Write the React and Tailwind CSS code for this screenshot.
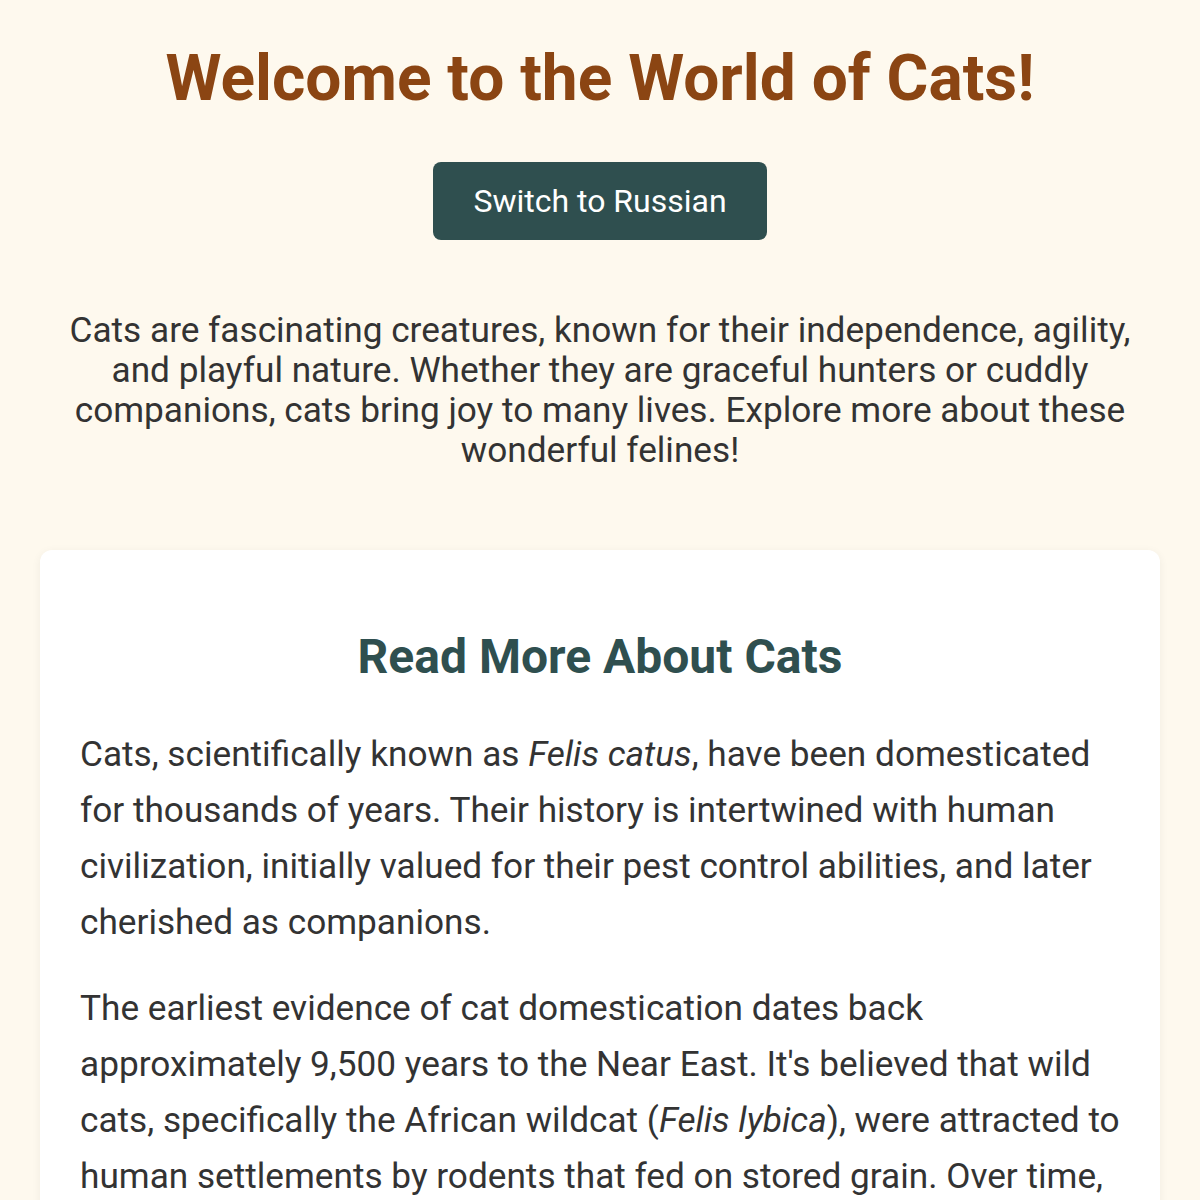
export default function App() {
  return (
    <div className="min-h-screen bg-[#fef9ee] px-10 pt-10 pb-10 font-['Roboto',sans-serif] text-[#333]">
      {/* Header */}
      <h1 className="text-center text-[64px] leading-[77px] font-bold text-[#8b4513]">
        Welcome to the World of Cats!
      </h1>

      <div className="mt-[45px] flex justify-center">
        <button className="rounded-lg bg-[#2f4f4f] px-10 py-5 text-[32px] leading-[38px] text-white">
          Switch to Russian
        </button>
      </div>

      <p className="mt-[70px] text-center text-[35.2px] leading-10">
        Cats are fascinating creatures, known for their independence, agility, and playful nature.
        Whether they are graceful hunters or cuddly companions, cats bring joy to many lives.
        Explore more about these wonderful felines!
      </p>

      {/* Read more card */}
      <section className="mt-20 rounded-xl bg-white p-10 shadow-[0_2px_10px_rgba(0,0,0,0.06)]">
        <h2 className="mt-[39px] text-center text-[48px] leading-[56px] font-bold text-[#2f4f4f]">
          Read More About Cats
        </h2>
        <div className="mt-[41px] flex max-w-[1040px] flex-col gap-[30px] text-[35.2px] leading-[56px]">
          <p>
            Cats, scientifically known as <em>Felis catus</em>, have been domesticated for thousands of
            years. Their history is intertwined with human civilization, initially valued for their pest
            control abilities, and later cherished as companions.
          </p>
          <p>
            The earliest evidence of cat domestication dates back approximately 9,500 years to the Near
            East. It's believed that wild cats, specifically the African wildcat (<em>Felis lybica</em>),
            were attracted to human settlements by rodents that fed on stored grain. Over time, cats
            became an integral part of human life and culture.
          </p>
        </div>
      </section>
    </div>
  )
}
